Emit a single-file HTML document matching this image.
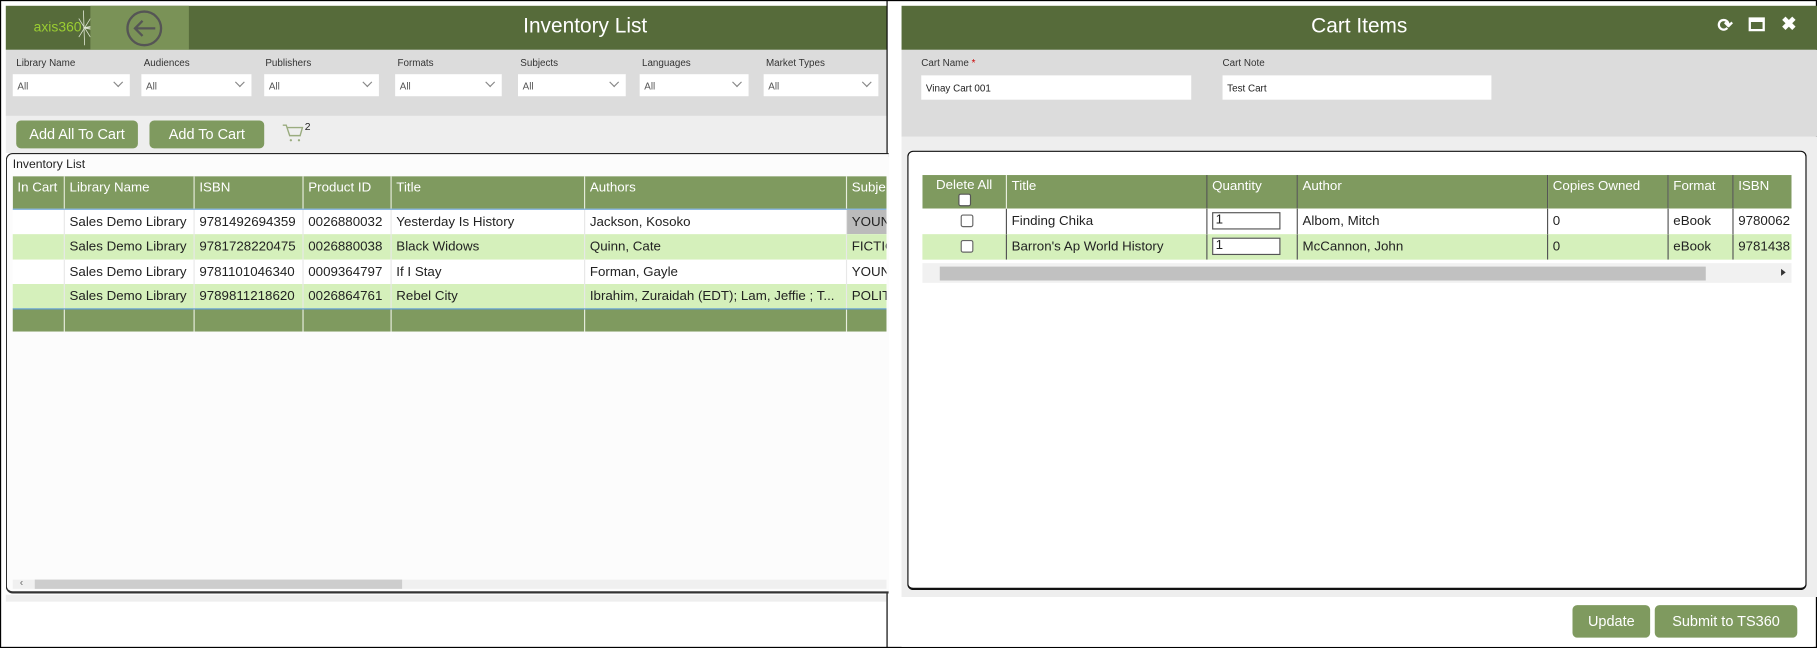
<!DOCTYPE html>
<html><head><style>
html,body{margin:0;padding:0;width:1817px;height:648px;overflow:hidden;background:#fff}
#w{position:absolute;left:0;top:0;width:1568px;height:559px;transform:scale(1.15880,1.15921);transform-origin:0 0;font-family:"Liberation Sans",sans-serif;color:#222}
.a{position:absolute;box-sizing:border-box}
.g{background:#566b3a}
.hd{color:#fff;font-size:18px;text-align:center}
.lbl{font-size:8.5px;color:#333}
.sel{background:#fff;height:19px;font-size:8.5px;color:#555;padding:5px 0 0 4px}
.sel:after{content:"";position:absolute;right:7px;top:4px;width:5px;height:5px;border-right:1px solid #888;border-bottom:1px solid #888;transform:rotate(45deg)}
.btn{background:#7f9a5f;color:#fff;border-radius:4px;text-align:center;font-size:12.5px}
.th{flex-shrink:0;box-sizing:border-box;background:#7f9a5f;color:#fff;font-size:11.5px;padding:4px 4px;border-right:1px solid #e8eedf;height:100%;white-space:nowrap;overflow:hidden}
.row{position:absolute;display:flex;font-size:11.5px;line-height:22px;white-space:nowrap;overflow:hidden}
.row div{flex-shrink:0;box-sizing:border-box;padding-left:4px;border-right:1px solid #e8e8e8;overflow:hidden;height:100%}
.gr{background:#d5f0bb}
</style></head><body><div id="w">
<div class="a" style="left:0;top:0;width:1568px;height:559px;border:1px solid #000"></div>
<div class="a" style="left:765px;top:0;width:1px;height:559px;background:#000"></div>
<div class="a g" style="left:5px;top:5px;width:760px;height:38px"></div>
<div class="a" style="left:29px;top:16px;font-size:12px;color:#9acd32">axis360</div>
<svg class="a" style="left:66px;top:8px" width="24" height="32" viewBox="0 0 24 32"><g stroke="#dfe6d4" stroke-width="0.7"><line x1="6" y1="1" x2="7" y2="31"/><line x1="2" y1="8" x2="12" y2="24"/><line x1="12" y1="8" x2="2" y2="24"/><line x1="6" y1="16" x2="22" y2="13"/><line x1="6" y1="16" x2="22" y2="16"/><line x1="6" y1="16" x2="22" y2="19"/></g></svg>
<div class="a" style="left:78px;top:5px;width:85px;height:38px;background:#7a9257"></div>
<svg class="a" style="left:108px;top:8px" width="33" height="33" viewBox="0 0 33 33"><circle cx="16.5" cy="16.5" r="14.5" fill="none" stroke="#555" stroke-width="2"/><path d="M26 16.5H9M15 10l-6.5 6.5L15 23" fill="none" stroke="#555" stroke-width="2"/></svg>
<div class="a hd" style="left:163px;top:12px;width:684px">Inventory List</div>
<div class="a" style="left:5px;top:43px;width:760px;height:57px;background:#dcdcdc"></div>
<div class="a lbl" style="left:14px;top:49px">Library Name</div><div class="a sel" style="left:11px;top:64px;width:101px">All</div>
<div class="a lbl" style="left:124px;top:49px">Audiences</div><div class="a sel" style="left:122px;top:64px;width:95px">All</div>
<div class="a lbl" style="left:229px;top:49px">Publishers</div><div class="a sel" style="left:228px;top:64px;width:99px">All</div>
<div class="a lbl" style="left:343px;top:49px">Formats</div><div class="a sel" style="left:341px;top:64px;width:92px">All</div>
<div class="a lbl" style="left:449px;top:49px">Subjects</div><div class="a sel" style="left:447px;top:64px;width:93px">All</div>
<div class="a lbl" style="left:554px;top:49px">Languages</div><div class="a sel" style="left:552px;top:64px;width:94px">All</div>
<div class="a lbl" style="left:661px;top:49px">Market Types</div><div class="a sel" style="left:659px;top:64px;width:99px">All</div>
<div class="a" style="left:5px;top:100px;width:760px;height:32px;background:#eee"></div>
<div class="a btn" style="left:14px;top:104px;width:105px;height:24px;line-height:24px">Add All To Cart</div>
<div class="a btn" style="left:129px;top:104px;width:99px;height:24px;line-height:24px">Add To Cart</div>
<svg class="a" style="left:243px;top:106px" width="20" height="18" viewBox="0 0 20 18"><path d="M1 2h3l3 9h9l2-7H5" fill="none" stroke="#9aac7f" stroke-width="1.2"/><circle cx="8" cy="15" r="1" fill="#9aac7f"/><circle cx="15" cy="15" r="1" fill="#9aac7f"/></svg>
<div class="a" style="left:263px;top:104px;font-size:9px">2</div>
<div class="a" style="left:5px;top:132px;width:762px;height:380px;background:#fcfcfc;border-top:1px solid #222;border-left:1px solid #222;border-bottom:2px solid #333;border-radius:6px 0 0 6px"></div>
<div class="a" style="left:11px;top:136px;font-size:10.5px">Inventory List</div>
<div class="a" style="left:11px;top:152px;width:754px;height:29px;border-bottom:1px solid #5b9bd5;display:flex;overflow:hidden">
<div class="th" style="width:45px">In Cart</div><div class="th" style="width:112px">Library Name</div><div class="th" style="width:94px">ISBN</div><div class="th" style="width:76px">Product ID</div><div class="th" style="width:167px">Title</div><div class="th" style="width:226px">Authors</div><div class="th" style="width:40px">Subje</div></div>
<div class="row" style="left:11px;top:181px;width:754px;height:21px;background:#fff"><div style="width:45px"></div><div style="width:112px">Sales Demo Library</div><div style="width:94px">9781492694359</div><div style="width:76px">0026880032</div><div style="width:167px">Yesterday Is History</div><div style="width:226px">Jackson, Kosoko</div><div style="width:40px;background:#bbb">YOUN</div></div>
<div class="row gr" style="left:11px;top:202px;width:754px;height:22px"><div style="width:45px"></div><div style="width:112px">Sales Demo Library</div><div style="width:94px">9781728220475</div><div style="width:76px">0026880038</div><div style="width:167px">Black Widows</div><div style="width:226px">Quinn, Cate</div><div style="width:40px">FICTIO</div></div>
<div class="row" style="left:11px;top:224px;width:754px;height:21px;background:#fff"><div style="width:45px"></div><div style="width:112px">Sales Demo Library</div><div style="width:94px">9781101046340</div><div style="width:76px">0009364797</div><div style="width:167px">If I Stay</div><div style="width:226px">Forman, Gayle</div><div style="width:40px">YOUN</div></div>
<div class="row gr" style="left:11px;top:245px;width:754px;height:21px;border-bottom:1px solid #5b9bd5"><div style="width:45px"></div><div style="width:112px">Sales Demo Library</div><div style="width:94px">9789811218620</div><div style="width:76px">0026864761</div><div style="width:167px">Rebel City</div><div style="width:226px">Ibrahim, Zuraidah (EDT); Lam, Jeffie ; T...</div><div style="width:40px">POLIT</div></div>
<div class="row" style="left:11px;top:267px;width:754px;height:19px;background:#7f9a5f"><div style="width:45px;border-color:#e8eedf"></div><div style="width:112px;border-color:#e8eedf"></div><div style="width:94px;border-color:#e8eedf"></div><div style="width:76px;border-color:#e8eedf"></div><div style="width:167px;border-color:#e8eedf"></div><div style="width:226px;border-color:#e8eedf"></div></div>
<div class="a" style="left:11px;top:500px;width:754px;height:8px;background:#f0f0f0"></div>
<div class="a" style="left:30px;top:500px;width:317px;height:8px;background:#cdcdcd"></div>
<div class="a" style="left:17px;top:497px;font-size:9px;color:#666">‹</div>
<div class="a" style="left:5px;top:513px;width:760px;height:6px;background:#eee"></div>
<div class="a g" style="left:778px;top:5px;width:790px;height:38px"></div>
<div class="a hd" style="left:778px;top:12px;width:790px">Cart Items</div>
<div class="a" style="left:1482px;top:12px;color:#fff;font-size:16px;font-weight:bold">⟳</div>
<div class="a" style="left:1509px;top:15px;width:14px;height:12px;border:2px solid #fff;border-top-width:4px"></div>
<div class="a" style="left:1537px;top:11px;color:#fff;font-size:16px;font-weight:bold">✖</div>
<div class="a" style="left:778px;top:43px;width:790px;height:75px;background:#dcdcdc"></div>
<div class="a lbl" style="left:795px;top:49px">Cart Name <span style="color:#c00">*</span></div>
<div class="a" style="left:795px;top:65px;width:233px;height:21px;background:#fff;font-size:8.5px;padding:6px 0 0 4px">Vinay Cart 001</div>
<div class="a lbl" style="left:1055px;top:49px">Cart Note</div>
<div class="a" style="left:1055px;top:65px;width:232px;height:21px;background:#fff;font-size:8.5px;padding:6px 0 0 4px">Test Cart</div>
<div class="a" style="left:778px;top:118px;width:790px;height:397px;background:#eee"></div>
<div class="a" style="left:783px;top:130px;width:776px;height:379px;background:#fff;border:1px solid #111;border-bottom-width:2px;border-radius:5px"></div>
<div class="a" style="left:796px;top:151px;width:750px;height:29px;display:flex;overflow:hidden">
<div class="th" style="width:73px;text-align:center;padding-top:3px;line-height:13px">Delete All<br><span style="display:inline-block;width:9px;height:9px;background:#fff;border:1px solid #555;border-radius:2px"></span></div><div class="th" style="width:173px;border-color:#555">Title</div><div class="th" style="width:78px;border-color:#555">Quantity</div><div class="th" style="width:216px;border-color:#555">Author</div><div class="th" style="width:104px;border-color:#555">Copies Owned</div><div class="th" style="width:56px;border-color:#555">Format</div><div class="th" style="width:50px;border:0">ISBN</div></div>
<div class="row" style="left:796px;top:180px;width:750px;height:22px;background:#fff"><div style="width:73px;text-align:center;border-color:#555"><span style="display:inline-block;width:9px;height:9px;border:1px solid #666;border-radius:2px;vertical-align:middle"></span></div><div style="width:173px;border-color:#555">Finding Chika</div><div style="width:78px;border-color:#555"><span style="display:inline-block;width:55px;height:13px;border:1px solid #555;line-height:12px;vertical-align:middle;padding-left:2px">1</span></div><div style="width:216px;border-color:#555">Albom, Mitch</div><div style="width:104px;border-color:#555">0</div><div style="width:56px;border-color:#555">eBook</div><div style="width:50px;border:0">9780062</div></div>
<div class="row gr" style="left:796px;top:202px;width:750px;height:22px"><div style="width:73px;text-align:center;border-color:#555"><span style="display:inline-block;width:9px;height:9px;border:1px solid #666;border-radius:2px;vertical-align:middle;background:#fff"></span></div><div style="width:173px;border-color:#555">Barron's Ap World History</div><div style="width:78px;border-color:#555"><span style="display:inline-block;width:55px;height:13px;border:1px solid #555;line-height:12px;vertical-align:middle;padding-left:2px;background:#fff">1</span></div><div style="width:216px;border-color:#555">McCannon, John</div><div style="width:104px;border-color:#555">0</div><div style="width:56px;border-color:#555">eBook</div><div style="width:50px;border:0">9781438</div></div>
<div class="a" style="left:796px;top:227px;width:750px;height:17px;background:#f1f1f1"></div>
<div class="a" style="left:811px;top:230px;width:661px;height:12px;background:#c1c1c1"></div>
<div class="a" style="left:1537px;top:232px;width:0;height:0;border-left:4px solid #333;border-top:3px solid transparent;border-bottom:3px solid transparent"></div>
<div class="a" style="left:778px;top:515px;width:787px;height:43px;background:#fff"></div>
<div class="a btn" style="left:1357px;top:522px;width:67px;height:28px;line-height:28px">Update</div>
<div class="a btn" style="left:1428px;top:522px;width:123px;height:28px;line-height:28px">Submit to TS360</div>
</div></body></html>
